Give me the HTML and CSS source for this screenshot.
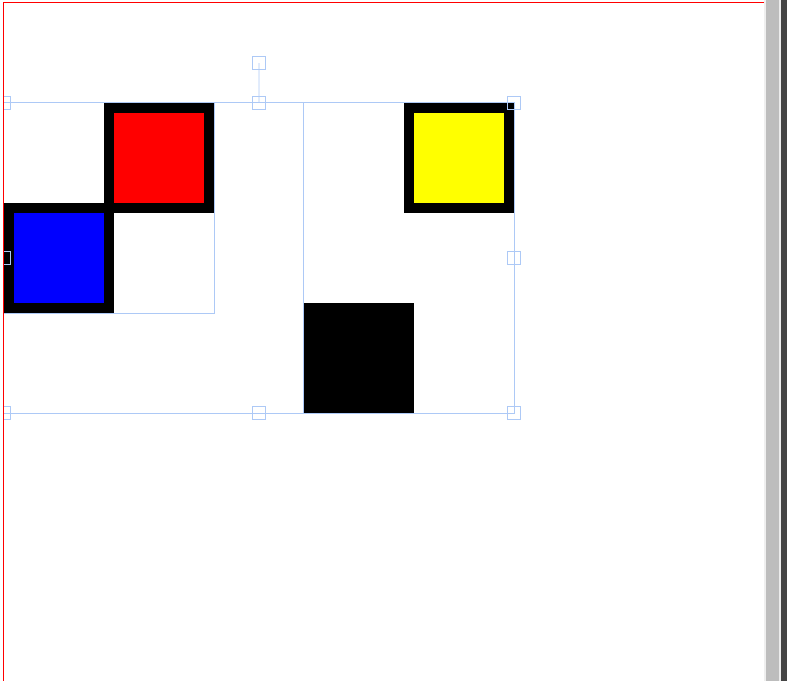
FILE: index.html
```html
<!DOCTYPE html>
<html>
<head>
<meta charset="utf-8">
<link rel="stylesheet" href="styles.css">
</head>
<body>
<div class="app">
  <div class="canvas">
    <svg class="scene" width="760" height="678" viewBox="4 3 760 678" xmlns="http://www.w3.org/2000/svg">
      <rect x="109" y="108" width="100" height="100" fill="#ff0000" stroke="#000" stroke-width="10"/>
      <rect x="9" y="208" width="100" height="100" fill="#0000ff" stroke="#000" stroke-width="10"/>
      <rect x="409" y="108" width="100" height="100" fill="#ffff00" stroke="#000" stroke-width="10"/>
      <rect x="304" y="303" width="110" height="110" fill="#000"/>
      <g class="sel" fill="none" stroke="#adc9f6" stroke-width="1">
        <rect x="3.5" y="102.5" width="211" height="211"/>
        <rect x="303.5" y="102.5" width="211" height="311"/>
        <rect x="3.5" y="102.5" width="511" height="311"/>
        <line x1="259" y1="63" x2="259" y2="102" stroke="#c4d8f8"/>
        <rect x="252.5" y="56.5" width="13" height="13"/>
        <rect x="-2.5" y="96.5" width="13" height="13"/>
        <rect x="252.5" y="96.5" width="13" height="13"/>
        <rect x="507.5" y="96.5" width="13" height="13"/>
        <rect x="-2.5" y="251.5" width="13" height="13"/>
        <rect x="507.5" y="251.5" width="13" height="13"/>
        <rect x="-2.5" y="406.5" width="13" height="13"/>
        <rect x="252.5" y="406.5" width="13" height="13"/>
        <rect x="507.5" y="406.5" width="13" height="13"/>
      </g>
    </svg>
  </div>
  <div class="scrollbar">
    <div class="edge"></div>
    <div class="track"></div>
    <div class="gap"></div>
    <div class="frame"></div>
  </div>
</div>
</body>
</html>
```

FILE: styles.css
```css
html, body {
  margin: 0;
  padding: 0;
  background: #ffffff;
  overflow: hidden;
  font-family: "Liberation Sans", Arial, sans-serif;
}

.app {
  display: flex;
  width: 787px;
  height: 681px;
  overflow: hidden;
}

.canvas {
  flex: none;
  width: 760px;
  height: 678px;
  margin-left: 3px;
  margin-top: 2px;
  border-top: 1px solid #ff0000;
  border-left: 1px solid #ff0000;
  background: #ffffff;
  overflow: hidden;
}

.scene {
  display: block;
}

.scrollbar {
  flex: none;
  display: flex;
  height: 681px;
}

.edge {
  width: 2px;
  background: #efefef;
}

.track {
  width: 13px;
  background: #bdbdbd;
}

.gap {
  width: 2px;
  background: #ebebeb;
}

.frame {
  width: 6px;
  background: #444444;
}
```
